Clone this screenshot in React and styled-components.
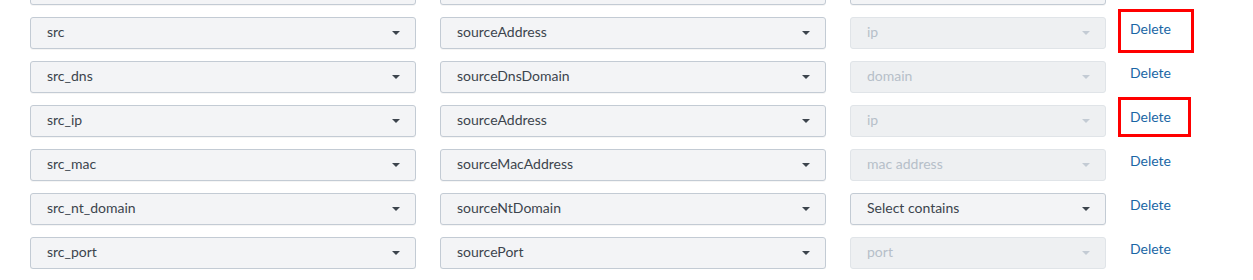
import React from "react";
import styled, { createGlobalStyle } from "styled-components";

const Global = createGlobalStyle`
  html, body { margin: 0; padding: 0; background: #ffffff; }
  body { font-family: Lato, "Open Sans", "Liberation Sans", sans-serif; overflow: hidden; }
`;

const List = styled.div`
  display: flex;
  flex-direction: column;
  gap: 12px;
  padding-left: 30px;
  margin-top: -27px;
`;

const Row = styled.div`
  display: flex;
  align-items: flex-start;
  gap: 24px;
  height: 32px;
`;

const Select = styled.div`
  box-sizing: border-box;
  width: ${(p) => p.$width}px;
  height: 32px;
  display: flex;
  align-items: center;
  justify-content: space-between;
  padding: 0 15px 3px 16px;
  border-radius: 3px;
  border: 1px solid ${(p) => (p.$disabled ? "#e0e4e8" : "#c3cbd4")};
  background: ${(p) => (p.$disabled ? "#eef0f2" : "#f3f4f6")};
  color: ${(p) => (p.$disabled ? "#b6bfc9" : "#3c444d")};
  font-size: 14px;
  line-height: 20px;
  box-shadow: ${(p) => (p.$disabled ? "none" : "0 1px 0 rgba(0,0,0,0.04)")};
`;

const Caret = styled.span`
  width: 0;
  height: 0;
  margin-top: 3px;
  border-left: 4px solid transparent;
  border-right: 4px solid transparent;
  border-top: 4px solid ${(p) => (p.$disabled ? "#c3cbd4" : "#3c444d")};
`;

const DeleteCell = styled.div`
  position: relative;
  height: 32px;
  display: flex;
  align-items: flex-start;
`;

const DeleteLink = styled.a`
  color: #1a66a5;
  font-size: 14px;
  line-height: 24px;
  text-decoration: none;
  cursor: pointer;
`;

const Highlight = styled.span`
  position: absolute;
  box-sizing: border-box;
  border: 3px solid #ff0000;
  left: -12px;
  top: ${(p) => p.$top}px;
  width: ${(p) => p.$w}px;
  height: ${(p) => p.$h}px;
  pointer-events: none;
`;

const rows = [
  { a: "", b: "", c: "", cd: false, partial: true },
  { a: "src", b: "sourceAddress", c: "ip", cd: true, hl: { top: -8, w: 76, h: 44 } },
  { a: "src_dns", b: "sourceDnsDomain", c: "domain", cd: true },
  { a: "src_ip", b: "sourceAddress", c: "ip", cd: true, hl: { top: -8, w: 73, h: 40 } },
  { a: "src_mac", b: "sourceMacAddress", c: "mac address", cd: true },
  { a: "src_nt_domain", b: "sourceNtDomain", c: "Select contains", cd: false },
  { a: "src_port", b: "sourcePort", c: "port", cd: true },
];

function Dropdown({ width, disabled, children }) {
  return (
    <Select $width={width} $disabled={disabled}>
      <span>{children}</span>
      <Caret $disabled={disabled} />
    </Select>
  );
}

export default function App() {
  return (
    <>
      <Global />
      <List>
        {rows.map((r, i) => (
          <Row key={i}>
            <Dropdown width={386}>{r.a}</Dropdown>
            <Dropdown width={386}>{r.b}</Dropdown>
            <Dropdown width={256} disabled={r.cd}>{r.c}</Dropdown>
            {!r.partial && (
              <DeleteCell>
                <DeleteLink>Delete</DeleteLink>
                {r.hl && <Highlight $top={r.hl.top} $w={r.hl.w} $h={r.hl.h} />}
              </DeleteCell>
            )}
          </Row>
        ))}
      </List>
    </>
  );
}
